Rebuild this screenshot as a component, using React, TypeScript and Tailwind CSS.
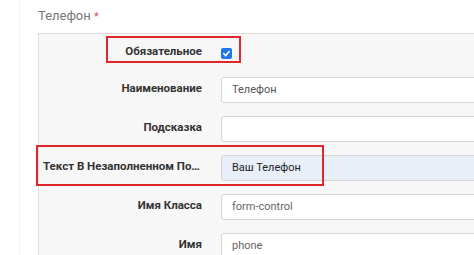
const rows = [
  { label: "Наименование", value: "Телефон", tone: "text-[#555]", bg: "bg-white" },
  { label: "Подсказка", value: "", tone: "text-[#555]", bg: "bg-white" },
  { label: "Текст В Незаполненном Поле", value: "Ваш Телефон", tone: "text-[#222]", bg: "bg-[#e8eff9]" },
  { label: "Имя Класса", value: "form-control", tone: "text-[#666]", bg: "bg-white" },
  { label: "Имя", value: "phone", tone: "text-[#666]", bg: "bg-white" },
];

const App: React.FC = () => {
  return (
    <div className="relative w-[474px] h-[255px] overflow-hidden bg-white font-['Roboto',sans-serif]">
      <div className="ml-[19px] h-full border-l border-[#f2f2f2] pl-[18px] pt-[8px]">
        {/* Field title */}
        <div className="text-[13px] leading-[16px] text-[#777]">
          Телефон <span className="text-[11px] text-[#d9534f]">*</span>
        </div>

        {/* Settings panel */}
        <div className="mt-[8px] w-[500px] border border-[#ddd] bg-[#f7f7f7] pt-[4px]">
          <div className="flex h-[26px] items-center mb-[13px]">
            <div className="ml-[4px] w-[159px] truncate text-right text-[11.5px] leading-[14px] font-bold text-[#333]">
              Обязательное
            </div>
            <span className="ml-[19px] mt-[4px] flex h-[11px] w-[11px] items-center justify-center rounded-[2px] bg-[#1d76ea]">
              <svg width="9" height="9" viewBox="0 0 10 10" fill="none">
                <path d="M2 5.2 L4.1 7.3 L8 2.8" stroke="white" strokeWidth="1.8" strokeLinecap="round" strokeLinejoin="round" />
              </svg>
            </span>
          </div>

          {rows.map((r) => (
            <div key={r.label} className="flex items-start mb-[13px]">
              <div className="ml-[4px] w-[159px] truncate pt-[4px] text-right text-[11.5px] leading-[14px] font-bold text-[#333]">
                {r.label}
              </div>
              <div
                className={`ml-[19px] flex h-[26px] flex-1 items-center rounded-[3px] border border-[#d6d6d6] px-[10px] text-[11px] ${r.bg} ${r.tone}`}
              >
                {r.value}
              </div>
            </div>
          ))}
        </div>
      </div>

      {/* Red highlight marks */}
      <div className="absolute left-[106px] top-[36px] h-[27px] w-[135px] border-2 border-[#e0262b]" />
      <div className="absolute left-[36px] top-[145px] h-[41px] w-[288px] border-2 border-[#e0262b]" />
    </div>
  );
};

export default App;
